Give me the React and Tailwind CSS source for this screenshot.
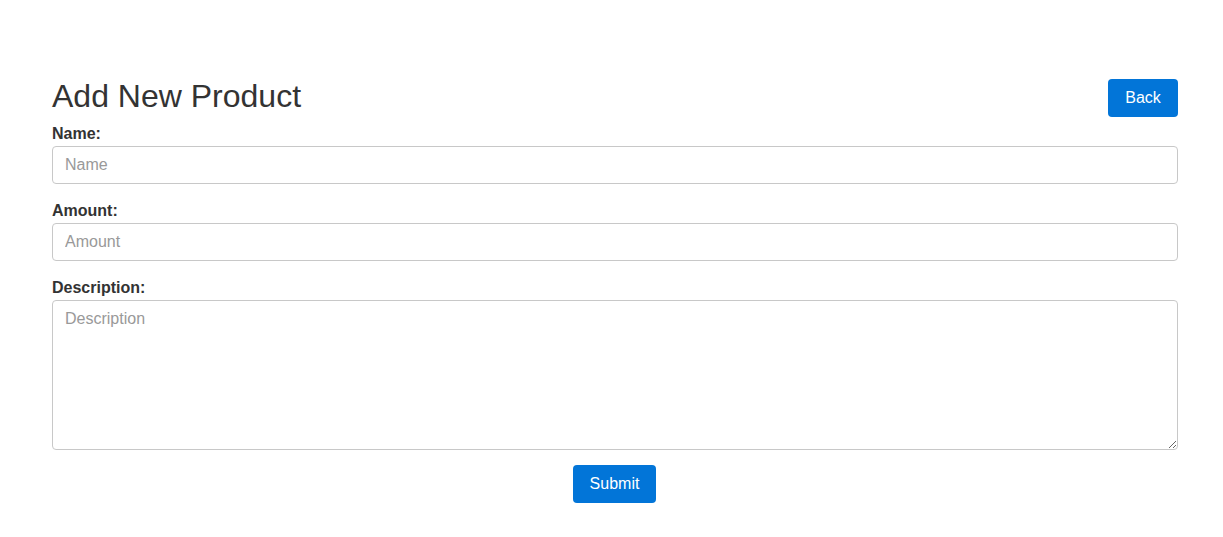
import React from 'react';

const Field = ({ label, placeholder, textarea }) => (
  <div className="mb-[15px]">
    <label className="block font-bold text-[16px] leading-6 text-[#333]">{label}</label>
    {textarea ? (
      <textarea
        placeholder={placeholder}
        className="block w-full h-[150px] px-3 py-[6px] text-[16px] leading-6 border border-[#c8c8c8] rounded-[4px] placeholder-[#999] text-[#464a4c] outline-none"
      />
    ) : (
      <input
        type="text"
        placeholder={placeholder}
        className="block w-full h-[38px] px-3 text-[16px] border border-[#c8c8c8] rounded-[4px] placeholder-[#999] text-[#464a4c] outline-none"
      />
    )}
  </div>
);

const App = () => {
  return (
    <div className="min-h-screen bg-white pt-[79px] font-['Liberation_Sans',Arial,sans-serif] text-[#333]">
      <div className="ml-[52px] w-[1126px]">
        <div className="flex items-center justify-between h-[38px] mb-[5px]">
          <h2 className="text-[32px] leading-[38px] font-normal text-[#333] mb-[4px]">Add New Product</h2>
          <button className="w-[70px] h-[38px] bg-[#0275d8] text-white text-[16px] rounded-[4px]">
            Back
          </button>
        </div>
        <form onSubmit={(e) => e.preventDefault()}>
          <Field label="Name:" placeholder="Name" />
          <Field label="Amount:" placeholder="Amount" />
          <Field label="Description:" placeholder="Description" textarea />
          <div className="flex justify-center pr-[1px]">
            <button type="submit" className="w-[83px] h-[38px] bg-[#0275d8] text-white text-[16px] rounded-[4px]">
              Submit
            </button>
          </div>
        </form>
      </div>
    </div>
  );
};

export default App;
